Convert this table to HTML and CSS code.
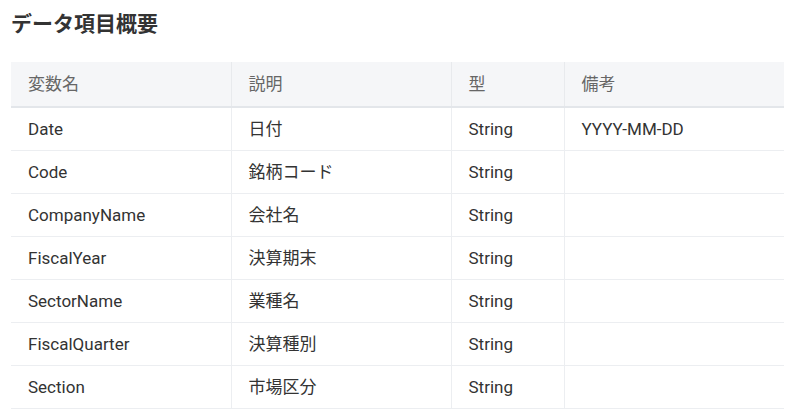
FILE: index.html
```html
<!DOCTYPE html>
<html lang="ja">
<head>
<meta charset="utf-8">
<link rel="stylesheet" href="styles.css">
</head>
<body>
<div class="page">
  <h2 class="title">データ項目概要</h2>
  <table class="data">
    <colgroup>
      <col class="c1"><col class="c2"><col class="c3"><col class="c4">
    </colgroup>
    <thead>
      <tr><th>変数名</th><th>説明</th><th>型</th><th>備考</th></tr>
    </thead>
    <tbody>
      <tr><td>Date</td><td>日付</td><td>String</td><td>YYYY-MM-DD</td></tr>
      <tr><td>Code</td><td>銘柄コード</td><td>String</td><td></td></tr>
      <tr><td>CompanyName</td><td>会社名</td><td>String</td><td></td></tr>
      <tr><td>FiscalYear</td><td>決算期末</td><td>String</td><td></td></tr>
      <tr><td>SectorName</td><td>業種名</td><td>String</td><td></td></tr>
      <tr><td>FiscalQuarter</td><td>決算種別</td><td>String</td><td></td></tr>
      <tr><td>Section</td><td>市場区分</td><td>String</td><td></td></tr>
    </tbody>
  </table>
</div>
</body>
</html>
```
FILE: styles.css
```css
html, body {
  margin: 0;
  padding: 0;
  background: #ffffff;
}
body {
  font-family: Roboto, "Noto Sans CJK JP", sans-serif;
  color: #333333;
}
.page {
  padding: 10px 16px 0 11px;
}
.title {
  margin: 0 0 24px 0;
  font-size: 21px;
  line-height: 28px;
  font-weight: 700;
  color: #333;
}
.data {
  width: 773px;
  border-collapse: collapse;
  table-layout: fixed;
  font-size: 17px;
  line-height: 24px;
}
.c1 { width: 220px; }
.c2 { width: 220px; }
.c3 { width: 113px; }
.c4 { width: 220px; }
.data th {
  background: #f5f6f8;
  color: #666;
  font-weight: 400;
  text-align: left;
  height: 44px;
  padding: 0 17px;
  border-bottom: 2px solid #e3e6ea;
  border-left: 1px solid #e8eaed;
}
.data td {
  height: 42px;
  padding: 0 17px;
  border-bottom: 1px solid #eceef1;
  border-left: 1px solid #eceef1;
  color: #333;
}
.data th:first-child, .data td:first-child {
  border-left: none;
}
```
